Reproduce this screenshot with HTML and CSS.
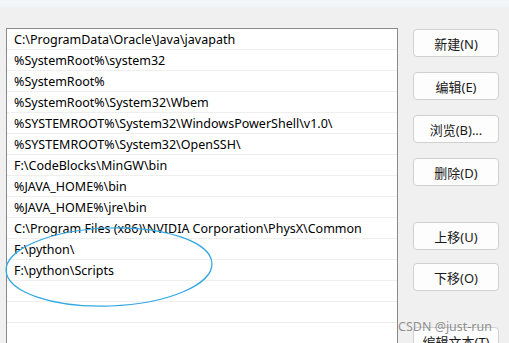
FILE: index.html
```
<!DOCTYPE html>
<html>
<head>
    <meta charset="utf-8" />
    <title>编辑环境变量</title>
    <link rel="stylesheet" href="styles.css">
</head>
<body>
    <div class="topband"></div>
    <div class="dialog">
        <div class="pathlist">
            <div class="row">C:\ProgramData\Oracle\Java\javapath</div>
            <div class="row">%SystemRoot%\system32</div>
            <div class="row">%SystemRoot%</div>
            <div class="row">%SystemRoot%\System32\Wbem</div>
            <div class="row">%SYSTEMROOT%\System32\WindowsPowerShell\v1.0\</div>
            <div class="row">%SYSTEMROOT%\System32\OpenSSH\</div>
            <div class="row">F:\CodeBlocks\MinGW\bin</div>
            <div class="row">%JAVA_HOME%\bin</div>
            <div class="row">%JAVA_HOME%\jre\bin</div>
            <div class="row">C:\Program Files (x86)\NVIDIA Corporation\PhysX\Common</div>
            <div class="row">F:\python\</div>
            <div class="row">F:\python\Scripts</div>
            <div class="row"></div>
            <div class="row"></div>
            <div class="row"></div>
        </div>
        <div class="buttons">
            <button class="btn">新建(N)</button>
            <button class="btn">编辑(E)</button>
            <button class="btn">浏览(B)...</button>
            <button class="btn">删除(D)</button>
            <button class="btn spaced">上移(U)</button>
            <button class="btn tight">下移(O)</button>
            <button class="btn spaced">编辑文本(T)</button>
        </div>
    </div>

    <!-- 手画的圈 -->
    <svg class="circle" width="230" height="100" viewBox="0 0 230 100">
        <ellipse cx="112" cy="48" rx="103" ry="39" fill="none" stroke="#33a8e2" stroke-width="1.2" transform="rotate(-2 112 48)" />
    </svg>

    <div class="watermark">CSDN @just-run</div>
</body>
</html>
```

FILE: styles.css
```
body {
    margin: 0;
    background-color: #f0f0f0;
    font-family: "Noto Sans", "Noto Sans CJK SC", sans-serif;
    font-size: 12.5px;
    color: #000;
    overflow: hidden;
    height: 343px;
}

.topband {
    height: 7px;
    background-color: #f3f6f9;
}

.dialog {
    display: flex;
    align-items: flex-start;
    padding-left: 6px;
    margin-top: 21px;
}

.pathlist {
    width: 390px;
    height: 400px;
    border: 1px solid #8a8a8a;
    background-color: #fff;
}

    .pathlist .row {
        height: 20px;
        line-height: 21px;
        border-bottom: 1px solid #efefef;
        padding-left: 7px;
        white-space: nowrap;
    }

.buttons {
    display: flex;
    flex-direction: column;
    gap: 15px;
    margin-left: 15px;
    padding-top: 1px;
}

.btn {
    width: 86px;
    height: 28px;
    border: 1px solid #d0d0d0;
    border-radius: 4px;
    background-color: #fdfdfd;
    font-family: "Noto Sans", "Noto Sans CJK SC", sans-serif;
    font-size: 13px;
    color: #1a1a1a;
    padding: 0;
    flex-shrink: 0;
}

    .btn.spaced {
        margin-top: 21px;
    }

    .btn.tight {
        margin-top: -2px;
    }

.circle {
    position: absolute;
    left: -3px;
    top: 219px;
}

.watermark {
    position: absolute;
    left: 398px;
    top: 318px;
    font-family: "Noto Sans", sans-serif;
    font-size: 12.5px;
    color: rgba(110, 110, 110, 0.75);
}
```
